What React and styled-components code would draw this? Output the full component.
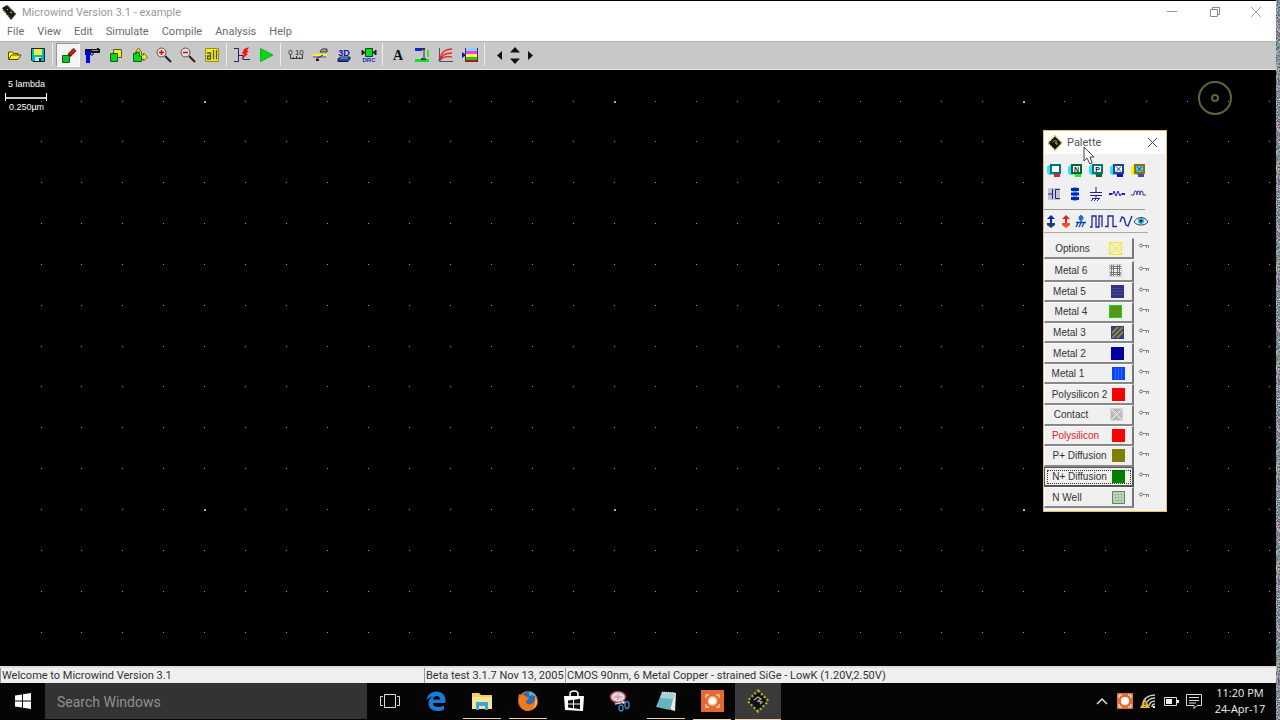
import React from 'react';
import styled, { createGlobalStyle, css } from 'styled-components';

const GlobalStyle = createGlobalStyle`
  * {
    box-sizing: border-box;
  }
  body {
    margin: 0;
    background: #000;
    font-family: Roboto, 'Open Sans', sans-serif;
    font-size: 11px;
  }
  button {
    margin: 0;
    padding: 0;
    border: 0;
    background: none;
    font: inherit;
    color: inherit;
  }
  svg {
    display: block;
    flex: none;
  }
`;

const Screen = styled.div`
  display: flex;
  height: 100vh;
  overflow: hidden;
`;

const Desktop = styled.div`
  flex: 1;
  min-width: 0;
  display: flex;
  flex-direction: column;
  border-top: 1px solid #000;
`;

const Noise = styled.svg`
  width: 4px;
  height: 100%;
`;

/* window chrome */

const TitleBar = styled.header`
  display: flex;
  align-items: center;
  height: 22px;
  background: #fff;
  color: #999;
`;

const Title = styled.h1`
  flex: 1;
  margin: 0 0 0 4px;
  font-size: 11px;
  font-weight: 400;
`;

const WindowButton = styled.button`
  display: flex;
  align-items: center;
  justify-content: center;
  width: 43px;
  height: 20px;
  &:last-child {
    width: 40px;
  }
`;

const MenuBar = styled.nav`
  display: flex;
  height: 18px;
  background: #fff;
  color: #6b6b6b;
`;

const MenuItem = styled.button`
  padding: 0 6px 0 7px;
  line-height: 18px;
`;

const Toolbar = styled.div`
  display: flex;
  height: 29px;
  padding: 1px 0 3px 2px;
  background: #c8c8c8;
  border-top: 1px solid #b4b4b4;
  border-bottom: 1px solid #e6e6e6;
`;

const ToolGroup = styled.div`
  display: flex;
  padding-right: 2px;
  margin-right: 3px;
  border-right: 1px solid #eee;
  &:last-child {
    border: 0;
    padding-left: 3px;
  }
`;

const ToolButton = styled.button`
  display: flex;
  align-items: center;
  justify-content: center;
  width: ${(props) => (props.$narrow ? '16px' : '24px')};
  height: 24px;
  ${(props) =>
    props.$pressed &&
    css`
      background: #f4f4f4;
      border: 1px solid #fff;
      border-top-color: #999;
      border-left-color: #999;
    `}
`;

/* drawing area */

const Workspace = styled.main`
  position: relative;
  flex: 1;
  min-height: 0;
  overflow: hidden;
  background: #000;
`;

const Dots = styled.svg`
  width: 100%;
  height: 100%;
`;

const Scale = styled.div`
  position: absolute;
  top: 8px;
  left: 5px;
  width: 43px;
  color: #fff;
  font-family: 'Liberation Sans', Arial, sans-serif;
  font-size: 9px;
  line-height: 12px;
  text-align: center;
  white-space: nowrap;
`;

const ClickMark = styled.svg`
  position: absolute;
  top: 10px;
  right: 43px;
`;

const Pointer = styled.svg`
  position: absolute;
  top: 15px;
  left: 39px;
`;

const PaletteWindow = styled.section`
  position: absolute;
  top: 60px;
  right: 109px;
  display: flex;
  flex-direction: column;
  width: 124px;
  height: 382px;
  background: #f0f0f0;
  border: 1px solid #e3c55c;
`;

const PaletteTitle = styled.div`
  display: flex;
  align-items: center;
  height: 23px;
  padding: 0 5px 0 3px;
  background: #fff;
  color: #555;
  h2 {
    flex: 1;
    margin: 0 0 0 4px;
    font-size: 11px;
    font-weight: 400;
  }
`;

const IconGrid = styled.div`
  display: grid;
  grid-template-columns: repeat(5, 21px);
  grid-auto-rows: 24px;
  padding-top: 4px;
  height: 56px;
  width: 101px;
  border-bottom: 1px solid #999;
  button {
    display: grid;
    justify-content: start;
    align-content: center;
    padding-left: 2px;
  }
`;

const SignalRow = styled.div`
  display: flex;
  justify-content: space-between;
  height: 23px;
  width: 104px;
  border-bottom: 1px solid #aaa;
  button {
    display: grid;
    place-items: center;
    width: 14px;
  }
`;

const LayerRows = styled.div`
  flex: 1;
  display: flex;
  flex-direction: column;
  padding: 5px 0 3px;
`;

const LayerRow = styled.div`
  flex: 1;
  display: flex;
  &:first-child {
    flex: none;
    height: 21px;
    margin-bottom: 2px;
  }
`;

const LayerButton = styled.button`
  display: flex;
  align-items: center;
  justify-content: center;
  gap: ${(props) => props.$gap}px;
  width: 90px;
  color: ${(props) => (props.$active ? '#e0222c' : '#333')};
  font-family: 'Liberation Sans', Arial, sans-serif;
  font-size: 10px;
  white-space: nowrap;
  background: #f0f0f0;
  border: 1px solid #fafafa;
  border-right: 2px solid #777;
  border-bottom: 2px solid #888;
  ${(props) =>
    props.$focused &&
    css`
      border: 1px solid #555;
      border-right-width: 2px;
      border-bottom-width: 2px;
      outline: 1px dotted #333;
      outline-offset: -4px;
    `}
`;

const LockButton = styled.button`
  display: flex;
  width: 20px;
  padding: 4px 0 0 5px;
`;

const StatusBar = styled.footer`
  display: grid;
  grid-template-columns: 424px 141px 1fr;
  height: 17px;
  background: #efefef;
  border-top: 2px solid #ddd;
  color: #333;
`;

const StatusCell = styled.div`
  padding-left: 1px;
  border-left: 1px solid #999;
  line-height: 15px;
  white-space: nowrap;
`;

/* taskbar */

const Taskbar = styled.div`
  display: flex;
  height: 37px;
  padding-bottom: 1px;
  background: #040504;
  color: #eee;
`;

const StartButton = styled.button`
  display: grid;
  place-items: center;
  width: 45px;
`;

const SearchBox = styled.input`
  width: 322px;
  padding: 2px 12px 0;
  border: 0;
  border-radius: 0;
  background: #333;
  color: #eee;
  font: 14px Roboto, sans-serif;
  &::placeholder {
    color: #909090;
    opacity: 1;
  }
`;

const TaskButton = styled.button`
  display: flex;
  flex-direction: column;
  align-items: center;
  justify-content: center;
  width: 46px;
  background: ${(props) => (props.$active ? '#3a3a3a' : 'transparent')};
  &::after {
    content: '';
    align-self: center;
    width: ${(props) => (props.$active ? '46px' : '38px')};
    height: 1px;
    margin-top: 6px;
    margin-bottom: -7px;
    background: ${(props) => (props.$running ? '#f3cfa6' : 'transparent')};
  }
`;

const Tray = styled.div`
  display: flex;
  margin-left: auto;
  padding-right: 6px;
`;

const TrayButton = styled.button`
  display: grid;
  place-items: center;
  width: 23px;
`;

const Clock = styled.time`
  display: flex;
  flex-direction: column;
  justify-content: center;
  width: 60px;
  margin-left: 5px;
  font-family: 'Open Sans', sans-serif;
  text-align: center;
  line-height: 16px;
  white-space: nowrap;
`;

/* icons */

const Svg = ({ s = 18, children }) => (
  <svg width={s} height={s} viewBox={`0 0 ${s} ${s}`} aria-hidden='true'>
    {children}
  </svg>
);

const OpenIcon = () => (
  <Svg>
    <path d='M3.5 13V6h4l1 1.5H13V9' fill='#ff0' stroke='#554a00' />
    <path d='M3.5 13.5l3-4.5h9.5l-3 4.5z' fill='#ffef20' stroke='#554a00' />
  </Svg>
);

const SaveIcon = () => (
  <Svg>
    <path d='M2.5 2.5h13v13H4l-1.500-1.500z' fill='#0bb' stroke='#123' />
    <path d='M5 3h8v6H5z' fill='#f5ee30' />
    <path d='M6 11h6v4H6z' fill='#ddd' />
    <path d='M10 12h2v3h-2z' fill='#123' />
  </Svg>
);

const BrushIcon = () => (
  <Svg>
    <path d='M3.5 9.500h7v7h-7z' fill='#0c2' stroke='#252' />
    <path d='M16 3.500L10 9.500' stroke='#511' strokeWidth='4' />
    <path d='M16 3.500L11 8.500' stroke='#c22' strokeWidth='2.500' />
  </Svg>
);

const GunIcon = () => (
  <Svg>
    <path d='M2 3h12V2h2v1h1v4H8v2H2z' fill='#111' />
    <path d='M3 5h5v4H7v8H3V9H2V6z' fill='#00d' />
    <path d='M8 9h2V7' fill='none' stroke='#00a' />
    <path d='M9 4h6v1H9z' fill='#999' />
  </Svg>
);

const CopyIcon = () => (
  <Svg>
    <path d='M6.500 3.500h8v8h-8z' fill='#ee2' stroke='#553' />
    <path d='M3.500 7.500h7v8h-7z' fill='#0d1' stroke='#252' />
  </Svg>
);

const MoveIcon = () => (
  <Svg>
    <path d='M4.500 6l3-4 3 4v3h2V7l4 4-4 4v-2H4.500z' fill='#ee2' stroke='#663' />
    <path d='M2.500 7.500h3V6h3v4h2v5.500h-8z' fill='#0d1' stroke='#252' />
  </Svg>
);

const ZoomIcon = ({ plus }) => (
  <Svg>
    <path d='M10 10l6 6' stroke='#222' strokeWidth='2' />
    <circle cx='6.500' cy='6.500' r='4.500' fill='#ecd9d9' stroke='#555' />
    <path d={plus ? 'M4 6.500h5M6.500 4v5' : 'M4 6.500h5'} stroke='#c11' strokeWidth='1.500' />
  </Svg>
);

const AllIcon = () => (
  <Svg>
    <path d='M2.500 2.500h13v13h-13z' fill='#f5ea20' stroke='#998c20' />
    <path d='M4 7h3.500v6H4.500v-3h3M10.500 4v9.500M13.500 4v9.500' fill='none' stroke='#553' strokeWidth='1.300' />
  </Svg>
);

const SimulateIcon = () => (
  <Svg>
    <path d='M1 2.500h4.500v13H1M5.500 9.500H10v4h7' fill='none' stroke='#226' />
    <path d='M16 1l-5 2-2 5h2l-3 6 7-6h-2l3-3h-2z' fill='#f11' />
  </Svg>
);

const RunIcon = () => (
  <Svg>
    <path d='M3.500 2.500v13L16 9z' fill='#0d1' stroke='#2a2' />
  </Svg>
);

const RulerIcon = () => (
  <Svg>
    <text x='9' y='9' fontSize='8' textAnchor='middle' fill='#222' fontFamily='Liberation Sans'>
      0 10
    </text>
    <path d='M3.500 9v3.500h12V9M6.500 11v1M9.500 10v2M12.500 11v1' fill='none' stroke='#333' />
  </Svg>
);

const SliceIcon = () => (
  <Svg>
    <path d='M2 8h14v2H2z' fill='#fe2' />
    <path d='M2 10h13v2H2z' fill='#88a' />
    <path d='M9 6l2-3h5v3H9zM5 13l7-4' fill='#aa7' stroke='#333' />
    <path d='M5 13h3v2H5z' fill='#222' />
  </Svg>
);

const ThreeDIcon = () => (
  <Svg>
    <text x='9' y='10' fontSize='9' fontWeight='700' textAnchor='middle' fill='#11a' fontFamily='Liberation Sans'>
      3D
    </text>
    <path d='M3 13l2-2h10v2l-2 2.500H3z' fill='#249' stroke='#124' />
    <path d='M5 12h8' stroke='#6bd' />
  </Svg>
);

const DrcIcon = () => (
  <Svg>
    <path d='M6.500 2.500h7v8h-7z' fill='#0d2' stroke='#141' />
    <path d='M3 4v5l3-2.500zM17 4v5l-3-2.500z' fill='#222' stroke='#222' />
    <text x='10' y='16' fontSize='6' fontWeight='700' textAnchor='middle' fill='#22c' fontFamily='Liberation Sans'>
      DRC
    </text>
  </Svg>
);

const LetterIcon = () => (
  <Svg>
    <text x='9' y='14' fontSize='14' fontWeight='700' textAnchor='middle' fill='#111' fontFamily='Liberation Serif'>
      A
    </text>
  </Svg>
);

const LayerCutIcon = () => (
  <Svg>
    <path d='M2 2h7v3H2z' fill='#12d' />
    <path d='M2 13h14v3H2z' fill='#1d3' />
    <path d='M8 3h4M8 13h5M11 2v12' stroke='#333' strokeWidth='2' />
    <path d='M11 4v9' stroke='#bbb' />
    <path d='M15 4v7' stroke='#4d4' strokeWidth='2' />
  </Svg>
);

const CurveIcon = () => (
  <Svg>
    <path d='M3 13C4 6 8 3 15 3M3 14c2-5 5-7 12-7M3 14c3-3 6-4 12-3' fill='none' stroke='#e22' strokeWidth='1.300' />
    <path d='M2.500 2v13.500H16M1 14h3' fill='none' stroke='#555' />
  </Svg>
);

const StackIcon = () => (
  <Svg>
    <path d='M5 2h12v3H5z' fill='#7df' />
    <path d='M5 5h12v3H5z' fill='#f3f' />
    <path d='M5 8h12v3H5z' fill='#ff3' />
    <path d='M5 11h12v3H5z' fill='#3b3' />
    <path d='M5 14h12v2H5z' fill='#b11' />
    <path d='M4.500 2v14M16.500 2v14' fill='none' stroke='#335' />
    <path d='M1 6l4 3-4 3z' fill='#11b' />
  </Svg>
);

const ArrowIcon = ({ d }) => (
  <Svg>
    <path d={d} fill='#111' />
  </Svg>
);

const ChipIcon = () => (
  <Svg>
    <path d='M2 5l5-3 9 9-5 6z' fill='#1a1a12' />
    <path d='M3 7l8 9M8 3l8 8' stroke='#77702c' strokeWidth='1.500' strokeDasharray='1 1.500' />
    <path d='M7 6l1 1M10 9l2 1' stroke='#bbb' />
  </Svg>
);

const DiamondChip = ({ s = 16 }) => (
  <svg width={s} height={s} viewBox='0 0 24 24' aria-hidden='true'>
    <path d='M12 2l10 10-10 10L2 12z' fill='#111' stroke='#b8b024' strokeWidth='3' strokeDasharray='2 2' />
    <path d='M12 3l9 9-9 9-9-9z' fill='#111' />
    <path d='M8 11l4-3 3 2-3 2 4 1-2 2' fill='none' stroke='#aaa' strokeWidth='1.300' />
  </svg>
);

// contact generators share one shape, only the metal and the letter change
const ViaIcon = ({ side, box, foot, mark }) => (
  <Svg s={16}>
    <path d='M5 3H3L1 5v6l2 2h3z' fill={side} />
    <path d='M5 11h9v4H8V13z' fill={foot} />
    <path d='M4 2h11v10H4z' fill={box} />
    <path d='M6 4h7v6H6z' fill={side === '#fe0' ? '#5cc' : '#fff'} />
    {mark === 'x' ? (
      <path d='M7 4.500l5 5M12 4.500l-5 5' stroke='#23a' />
    ) : (
      <text x='9.500' y='10' fontSize='7' fontWeight='700' textAnchor='middle' fill='#124' fontFamily='Liberation Sans'>
        {mark}
      </text>
    )}
  </Svg>
);

const generators = [
  ['N contact', <ViaIcon side='#3df' box='#077' foot='#d23' />],
  ['N+ diffusion contact', <ViaIcon side='#3df' box='#063' foot='#2e2' mark='N' />],
  ['P+ diffusion contact', <ViaIcon side='#3df' box='#077' foot='#163' mark='P' />],
  ['Via', <ViaIcon side='#3df' box='#124a8a' foot='#11c' mark='x' />],
  ['Stacked contacts', <ViaIcon side='#fe0' box='#886f18' foot='#35a' mark='x' />],
  [
    'MOS generator',
    <Svg s={16}>
      <path d='M2 2h12v12H2z' fill='#c4c4cc' />
      <path d='M2 8h4M6.500 3v10M14 3.500H9.500v9H14' fill='none' stroke='#228' />
    </Svg>,
  ],
  [
    'Resistor',
    <Svg s={16}>
      <path d='M8 1v14' stroke='#3cf' strokeWidth='4' />
      <path d='M4 3.500h8M4 8h8M4 12.500h8' stroke='#12b' strokeWidth='3' />
    </Svg>,
  ],
  [
    'Capacitor',
    <Svg s={16}>
      <path d='M8 1v5M2 6.500h12M2 9.500h12M8 10v3M4 12.500h8M5 13l-2 2M8 13l-2 2M11 13l-2 2' stroke='#228' />
    </Svg>,
  ],
  [
    'Virtual resistor',
    <Svg s={16}>
      <path d='M1 8h3l1-3 2 5 2-5 2 5 1-2h3' fill='none' stroke='#22a' />
      <path d='M0 7h3v2H0zM13 7h3v2h-3z' fill='#22a' />
    </Svg>,
  ],
  [
    'Inductor',
    <Svg s={16}>
      <path d='M1 9h3V7l1-2h1l1 2v2-2l1-2h1l1 2v2-2l1-2h1l1 2v2h3' fill='none' stroke='#339' />
    </Svg>,
  ],
];

const Supply = ({ color, ball }) => (
  <Svg s={14}>
    <path d='M7 1l4 4H8v4H6V5H3z' fill={color} />
    <path d='M3 9h8v2l-4 3-4-3z' fill={ball} />
  </Svg>
);

const Wave = ({ d }) => (
  <Svg s={14}>
    <path d={d} fill='none' stroke='#22a' strokeWidth='1.300' />
  </Svg>
);

const signals = [
  ['VDD', <Supply color='#12b' ball='#147' />],
  ['VDD high', <Supply color='#d22' ball='#e52' />],
  [
    'Ground',
    <Svg s={14}>
      <path d='M7 1v8M2 8.500h10M4 9l-2 4M7 9l-2 4M10 9l-2 4' stroke='#14a' strokeWidth='1.300' />
      <circle cx='7' cy='4' r='2.500' fill='#17c' />
    </Svg>,
  ],
  ['Clock', <Wave d='M1 13h2V2h4v11h3V2h3v11' />],
  ['Pulse', <Wave d='M1 12.500h3V2h5v10.500h4' />],
  ['Sinus', <Wave d='M1 8l2-5 2 1 2 7 2 1 4-10' />],
  [
    'Visible',
    <Svg s={14}>
      <path d='M0 8c3-6 11-6 14 0-3 4-11 4-14 0z' fill='#def' stroke='#345' />
      <circle cx='7' cy='7' r='3' fill='#3ac' />
      <circle cx='7' cy='7' r='1.300' fill='#123' />
    </Svg>,
  ],
];

const KeyIcon = () => (
  <svg width='10' height='8' viewBox='0 0 10 8' aria-hidden='true'>
    <circle cx='2' cy='3.500' r='1.500' fill='none' stroke='#777' />
    <path d='M3.500 3.500H10M7.500 4v2M9.500 4v2' stroke='#888' />
  </svg>
);

const layers = [
  { name: 'Options', gap: 19, fill: '#f3f0c0', line: 'M0 0l13 13M13 0L0 13', ink: '#f2e63a', edge: '#f2e63a' },
  { name: 'Metal 6', gap: 22, fill: '#eee', line: 'M0 2.500h13M0 4.500h13M0 8.500h13M0 10.500h13M2.500 0v13M4.500 0v13M8.500 0v13M10.500 0v13', ink: '#777', edge: '#ccc' },
  { name: 'Metal 5', gap: 25, fill: '#33337f', line: 'M0 3.500h13M0 6.500h13M0 9.500h13', ink: '#474790', edge: '#338' },
  { name: 'Metal 4', gap: 22, fill: '#4d9a10', line: 'M0 4l9 9M0 0l13 13M4 0l9 9', ink: '#789030', edge: '#1ed41e' },
  { name: 'Metal 3', gap: 25, fill: '#3c3f70', line: 'M0 8L8 0M0 13L13 0M5 13l8-8', ink: '#8a8a30', edge: '#339', weight: 2 },
  { name: 'Metal 2', gap: 25, fill: '#0000a0', edge: '#0000a0' },
  { name: 'Metal 1', gap: 28, fill: '#0b45ff', line: 'M3.500 0v13M6.500 0v13M9.500 0v13', ink: '#2f6cff', edge: '#0b45ff' },
  { name: 'Polysilicon 2', gap: 5, fill: '#f00', line: 'M4.500 0v13M8.500 0v13M0 6.500h13', ink: '#e00a0a', edge: '#f00' },
  { name: 'Contact', gap: 22, fill: '#bbb', line: 'M1 1l11 11M12 1L1 12', ink: '#f4f4f4', edge: '#d4d4d4' },
  { name: 'Polysilicon', gap: 13, fill: '#f00', edge: '#f00', active: true },
  { name: 'P+ Diffusion', gap: 5, fill: '#808000', edge: '#808000' },
  { name: 'N+ Diffusion', gap: 5, fill: '#008000', edge: '#008000', focused: true },
  { name: 'N Well', gap: 30, fill: '#bcd0bc', line: 'M3 3.500h8M3 6.500h8M3 9.500h8', ink: '#678f67', edge: '#5a8a5a', dash: '1 2' },
];

const Swatch = ({ layer }) => (
  <svg width='13' height='13' viewBox='0 0 13 13' aria-hidden='true'>
    <path d='M0 0h13v13H0z' fill={layer.fill} />
    {layer.line && <path d={layer.line} stroke={layer.ink} strokeWidth={layer.weight} strokeDasharray={layer.dash} />}
    <path d='M.5.5h12v12H.5z' fill='none' stroke={layer.edge} />
  </svg>
);

const toolGroups = [
  [
    ['Open', <OpenIcon />],
    ['Save', <SaveIcon />],
  ],
  [
    ['Draw box', <BrushIcon />],
    ['Delete', <GunIcon />],
    ['Copy', <CopyIcon />],
    ['Stretch, move', <MoveIcon />],
    ['Zoom in', <ZoomIcon plus />],
    ['Zoom out', <ZoomIcon />],
    ['View all', <AllIcon />],
  ],
  [
    ['View electrical node', <SimulateIcon />],
    ['Run simulation', <RunIcon />],
  ],
  [
    ['Measure distance', <RulerIcon />],
    ['2D cross-section', <SliceIcon />],
    ['3D process', <ThreeDIcon />],
    ['Design rule checker', <DrcIcon />],
  ],
  [
    ['Add text', <LetterIcon />],
    ['Connect layers', <LayerCutIcon />],
    ['MOS characteristics', <CurveIcon />],
    ['Palette', <StackIcon />],
  ],
];

const menus = ['File', 'View', 'Edit', 'Simulate', 'Compile', 'Analysis', 'Help'];

const dots = [];
for (let row = 0; row < 14; row++) {
  for (let col = 0; col < 31; col++) {
    dots.push({
      x: Math.floor(41 + col * 40.95),
      y: Math.floor(31 + row * 40.85),
      major: col % 10 === 4 && row % 10 === 0,
    });
  }
}

const noiseColors = ['#8a9aa0', '#b0707c', '#5f8a70', '#c8c8d0', '#6a6a9a', '#555', '#a0b088', '#a898b8', '#5a9a9a'];
let seed = 11;
const noise = Array.from({ length: 400 }, () => {
  seed = (seed * 16807) % 2147483647;
  return noiseColors[seed % 9];
});

const apps = [
  {
    name: 'Task View',
    icon: (
      <svg width='20' height='16' viewBox='0 0 20 16' fill='none' stroke='#ddd'>
        <path d='M4.500 1.500h11v13h-11zM3 3.500H.5v9H3M17 3.500h2.500v9H17' />
      </svg>
    ),
  },
  {
    name: 'Edge',
    icon: (
      <svg width='22' height='22' viewBox='0 0 22 22'>
        <path
          d='M1.500 10.500C2 5 6 1.500 11.500 1.500c6 0 9 4.500 9 9v2.500H8c.2 3 2.500 4 5.500 4 2 0 4-.6 5.500-1.500v4c-2 1-4 1.500-6.500 1.500C7 21 3.500 18 3.500 13.500c0-3.500 2-6 4.500-7-3 .3-5 1.500-6.500 4zM8 9.500h7c0-2.300-1.200-3.500-3.300-3.500S8.300 7.300 8 9.500z'
          fill='#1a7ad9'
        />
      </svg>
    ),
  },
  {
    name: 'File Explorer',
    running: true,
    icon: (
      <svg width='22' height='22' viewBox='0 0 22 22'>
        <path d='M1 3h7l2 2h11v14H1z' fill='#f0cf68' />
        <path d='M1 7h20v12H1z' fill='#fbe391' />
        <path d='M5 20v-8h12v8h-3v-4H8v4z' fill='#36a8e0' />
      </svg>
    ),
  },
  {
    name: 'Firefox',
    running: true,
    icon: (
      <svg width='22' height='22' viewBox='0 0 22 22'>
        <circle cx='11' cy='11' r='10' fill='#e8641b' />
        <circle cx='12' cy='9' r='7.500' fill='#2a6cb8' />
        <path d='M12 2c4 0 6 2 7 5-3-2-5-2-7-1z' fill='#4fb4e0' />
        <path d='M2 4c1 1 2 1 4 1 2 0 3 2 6 3-1 2-3 2-3 4s3 3 5 2c3-1 4-3 4-6 3 5 1 12-7 13C4 21 0 13 2 4z' fill='#ee7a1e' />
        <path d='M18 6c3 4 3 10-2 13 2-4 3-8 2-13z' fill='#fbc62f' />
      </svg>
    ),
  },
  {
    name: 'Store',
    icon: (
      <svg width='22' height='24' viewBox='0 0 22 24'>
        <path d='M7 7V5c0-4 8-4 8 0v2' fill='none' stroke='#fff' strokeWidth='1.500' />
        <path d='M1 7h20l-1 15-18-1z' fill='#fff' />
        <path d='M5 11.500l5-.7v3.700H5zM11 10.700l6-.9v4.700h-6zM5 15.500h5v3.700l-5-.7zM11 15.500h6v4.700l-6-.9z' fill='#111' />
      </svg>
    ),
  },
  {
    name: 'Snipping Tool',
    icon: (
      <svg width='22' height='22' viewBox='0 0 22 22'>
        <ellipse cx='9' cy='7' rx='7.500' ry='5.500' fill='#d8dbe4' stroke='#c0394a' strokeWidth='1.500' />
        <path d='M5 7h8M9 4v6' stroke='#e5808a' />
        <path d='M6 14l10-2M12 8l3 6' stroke='#ccd' strokeWidth='1.500' />
        <ellipse cx='12' cy='18' rx='2' ry='3' fill='none' stroke='#3c80b8' strokeWidth='1.500' />
        <ellipse cx='18' cy='15' rx='2' ry='3.500' fill='none' stroke='#3c80b8' strokeWidth='1.500' />
      </svg>
    ),
  },
  {
    name: 'Notepad',
    running: true,
    icon: (
      <svg width='22' height='22' viewBox='0 0 22 22'>
        <path d='M7 2l14 1-1 18-4-1z' fill='#e4ecec' />
        <path d='M7 2l13 1-5 17-14-3z' fill='#69b3bf' />
        <path d='M7 2l13 1-2 6-13-1z' fill='#9fd3d8' />
        <path d='M7 2.500l13 1' stroke='#ddd' strokeWidth='2' strokeDasharray='1 1' />
      </svg>
    ),
  },
  {
    name: 'Screen Recorder',
    running: true,
    icon: (
      <svg width='24' height='24' viewBox='0 0 24 24'>
        <path d='M1 1h23v22H1z' fill='#e2692f' />
        <path d='M6 9V6h3M16 6h3v3M19 15v3h-3M9 18H6v-3' fill='none' stroke='#f6c3a3' strokeWidth='1.500' />
        <circle cx='12.500' cy='12' r='5' fill='#f6b88f' />
        <circle cx='12.500' cy='12' r='3.500' fill='#fff' />
      </svg>
    ),
  },
  { name: 'Microwind', running: true, active: true, icon: <DiamondChip s={24} /> },
];

const trayIcons = [
  [
    'Show hidden icons',
    <Svg s={16}>
      <path d='M3 11l5-5 5 5' fill='none' stroke='#ddd' strokeWidth='1.500' />
    </Svg>,
  ],
  [
    'Recorder',
    <Svg s={16}>
      <path d='M0 0h16v16H0z' fill='#dc7038' />
      <path d='M2 5V2h3M11 2h3v3M14 11v3h-3M5 14H2v-3' fill='none' stroke='#fff' />
      <circle cx='8' cy='8' r='4' fill='#fff' />
    </Svg>,
  ],
  [
    'Network',
    <Svg s={16}>
      <path d='M3 11C3 6 8 2 15 2M6 12c0-4 4-7 9-7M9 13c0-3 3-5 6-5M12 14c0-2 1-3 3-3' fill='none' stroke='#ccc' strokeWidth='1.500' />
      <path d='M13 13h2v2h-2z' fill='#eee' />
      <path d='M5 6l5 9H0z' fill='#e8b730' />
      <path d='M5 9v3M5 13v1' stroke='#222' />
    </Svg>,
  ],
  [
    'Battery',
    <Svg s={16}>
      <path d='M1.500 4.500h12v8h-12z' fill='none' stroke='#ddd' />
      <path d='M3 6h6v5H3zM14 7h2v3h-2z' fill='#eee' />
    </Svg>,
  ],
  [
    'Action Center',
    <Svg s={16}>
      <path d='M.5 1.500h15v11H11L8 15.500v-3H.5zM3 4.500h10M3 7.500h10M3 10h7' fill='none' stroke='#ddd' />
    </Svg>,
  ],
];

const Palette = () => (
  <PaletteWindow aria-label='Palette'>
    <PaletteTitle>
      <DiamondChip />
      <h2>Palette</h2>
      <button aria-label='Close palette'>
        <svg width='17' height='16' viewBox='0 0 17 16' stroke='#444'>
          <path d='M4 3l9 9M13 3l-9 9' />
        </svg>
      </button>
    </PaletteTitle>
    <IconGrid>
      {generators.map(([name, icon]) => (
        <button key={name} aria-label={name}>
          {icon}
        </button>
      ))}
    </IconGrid>
    <SignalRow>
      {signals.map(([name, icon]) => (
        <button key={name} aria-label={name}>
          {icon}
        </button>
      ))}
    </SignalRow>
    <LayerRows>
      {layers.map((layer) => (
        <LayerRow key={layer.name}>
          <LayerButton $gap={layer.gap} $active={layer.active} $focused={layer.focused}>
            {layer.name}
            <Swatch layer={layer} />
          </LayerButton>
          <LockButton aria-label={`Lock ${layer.name}`}>
            <KeyIcon />
          </LockButton>
        </LayerRow>
      ))}
    </LayerRows>
    <Pointer width='14' height='20' viewBox='0 0 14 20'>
      <path d='M1 1v14l3-3 3 6 2-1-2-6h4z' fill='#fff' stroke='#444' />
    </Pointer>
  </PaletteWindow>
);

const App = () => {
  return (
    <>
      <GlobalStyle />
      <Screen>
        <Desktop>
          <TitleBar>
            <ChipIcon />
            <Title>Microwind Version 3.1 - example</Title>
            <WindowButton aria-label='Minimize'>
              <Svg s={12}>
                <path d='M1 5.500h10' stroke='#999' />
              </Svg>
            </WindowButton>
            <WindowButton aria-label='Restore'>
              <Svg s={12}>
                <path d='M1.500 3.500h7v7h-7zM3.500 3V1.500h7v7H9' fill='none' stroke='#888' />
              </Svg>
            </WindowButton>
            <WindowButton aria-label='Close'>
              <Svg s={12}>
                <path d='M1 1l10 10M11 1L1 11' stroke='#999' />
              </Svg>
            </WindowButton>
          </TitleBar>
          <MenuBar>
            {menus.map((menu) => (
              <MenuItem key={menu}>{menu}</MenuItem>
            ))}
          </MenuBar>
          <Toolbar>
            {toolGroups.map((group, i) => (
              <ToolGroup key={i}>
                {group.map(([name, icon]) => (
                  <ToolButton key={name} aria-label={name} $pressed={name === 'Draw box'}>
                    {icon}
                  </ToolButton>
                ))}
              </ToolGroup>
            ))}
            <ToolGroup>
              <ToolButton $narrow aria-label='Scroll left'>
                <ArrowIcon d='M12 5v9L7 9.500z' />
              </ToolButton>
              <ToolButton $narrow aria-label='Scroll up or down'>
                <ArrowIcon d='M9 1l5 5.500H4zM9 18l5-5.500H4z' />
              </ToolButton>
              <ToolButton $narrow aria-label='Scroll right'>
                <ArrowIcon d='M6 5v9l5-4.500z' />
              </ToolButton>
            </ToolGroup>
          </Toolbar>
          <Workspace>
            <Dots aria-hidden='true'>
              {dots.map((dot) => (
                <rect
                  key={`${dot.x}-${dot.y}`}
                  x={dot.x}
                  y={dot.y}
                  width={dot.major ? 2 : 1}
                  height={dot.major ? 2 : 1}
                  fill={dot.major ? '#aaa' : '#999'}
                />
              ))}
            </Dots>
            <Scale>
              5 lambda
              <svg width='43' height='11' viewBox='0 0 43 11' stroke='#fff'>
                <path d='M.5 3v8M41.500 3v8' />
                <path d='M1 8h41' strokeWidth='2' opacity='.8' />
              </svg>
              0.250µm
            </Scale>
            <ClickMark width='36' height='36' viewBox='0 0 36 36' fill='none' stroke='#566b37'>
              <circle cx='18' cy='18' r='16' strokeWidth='2' />
              <circle cx='18' cy='18' r='3' strokeWidth='2' />
            </ClickMark>
            <Palette />
          </Workspace>
          <StatusBar>
            <StatusCell>Welcome to Microwind Version 3.1</StatusCell>
            <StatusCell>Beta test 3.1.7 Nov 13, 2005</StatusCell>
            <StatusCell>CMOS 90nm, 6 Metal Copper - strained SiGe - LowK (1.20V,2.50V)</StatusCell>
          </StatusBar>
          <Taskbar>
            <StartButton aria-label='Start'>
              <Svg s={16}>
                <path d='M0 2.500l7-1v6H0zM8 1.300L16 0v7.500H8zM0 8.500h7v6l-7-1zM8 8.500h8V16l-8-1.300z' fill='#fff' />
              </Svg>
            </StartButton>
            <SearchBox type='search' placeholder='Search Windows' aria-label='Search Windows' />
            {apps.map((app) => (
              <TaskButton key={app.name} aria-label={app.name} $running={app.running} $active={app.active}>
                {app.icon}
              </TaskButton>
            ))}
            <Tray>
              {trayIcons.map(([name, icon]) => (
                <TrayButton key={name} aria-label={name}>
                  {icon}
                </TrayButton>
              ))}
              <Clock>
                <span>11:20 PM</span>
                <span>24-Apr-17</span>
              </Clock>
            </Tray>
          </Taskbar>
        </Desktop>
        <Noise aria-hidden='true'>
          <defs>
            <pattern id='noise' width='4' height='100' patternUnits='userSpaceOnUse'>
              {noise.map((color, i) => (
                <rect key={i} x={i % 4} y={i >> 2} width='1' height='1' fill={color} />
              ))}
            </pattern>
          </defs>
          <rect width='4' height='100%' fill='url(#noise)' />
        </Noise>
      </Screen>
    </>
  );
};

export default App;
